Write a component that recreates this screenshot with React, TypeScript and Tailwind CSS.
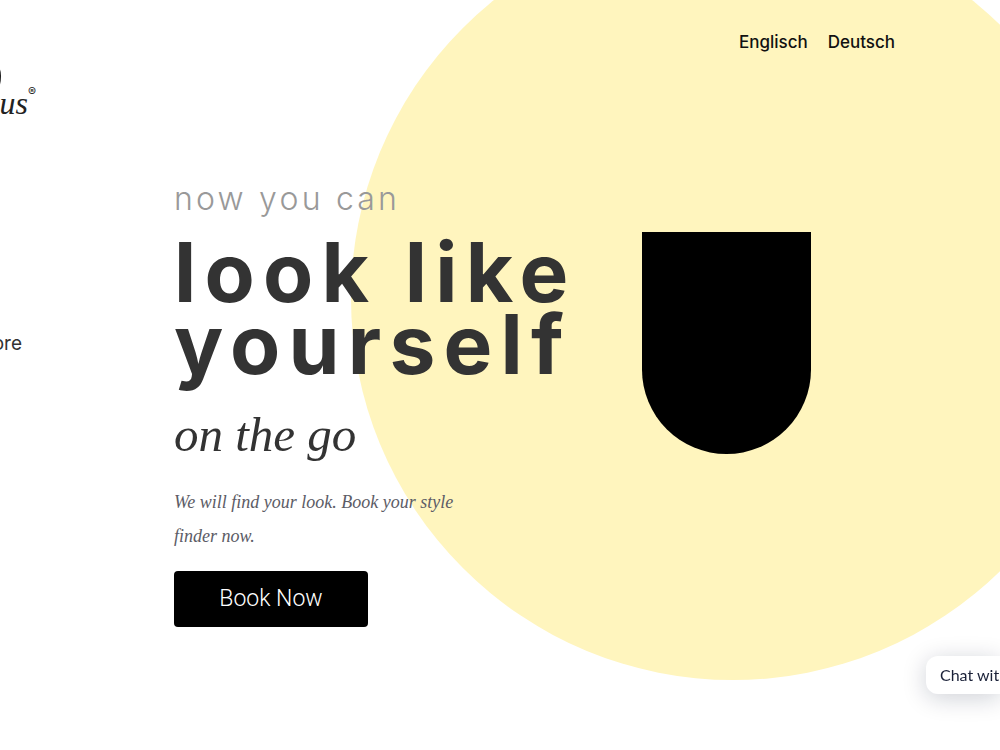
// ---------------------------------------------------------------------------
// Landing hero: cropped side rail, headline, shape, language links, chat
// ---------------------------------------------------------------------------

const LANGUAGES = [
  { code: "en", label: "Englisch" },
  { code: "de", label: "Deutsch" },
];

function SideRail() {
  return (
    <aside className="w-[174px] shrink-0 pt-[68px]">
      {/* Logo, runs off the left edge */}
      <a
        href="#home"
        className="relative flex h-[51px] w-9 items-end justify-end overflow-hidden whitespace-nowrap text-[#222]"
      >
        {/* Loop of the tall stroke */}
        <svg
          className="absolute top-0 left-0 h-6 w-2"
          viewBox="0 0 8 24"
          fill="none"
          stroke="currentColor"
          strokeWidth="1.2"
        >
          <path d="M-1 1C1 4 0.8 12 -1 18" />
        </svg>
        <span className="font-['Liberation_Serif',serif] text-[32px] leading-8 italic">
          us
        </span>
        <sup className="top-0 self-start pt-4 font-['Inter',sans-serif] text-[12px] leading-4">
          ®
        </sup>
      </a>
      <nav className="mt-[213px] flex w-[22px] justify-end overflow-hidden whitespace-nowrap">
        <a
          href="#store"
          className="font-['Inter',sans-serif] text-[19px] leading-6 text-[#333]"
        >
          Store
        </a>
      </nav>
    </aside>
  );
}

function Hero() {
  return (
    <section className="flex items-start pt-[127px]">
      <div className="w-[468px] shrink-0">
        <p className="font-['Inter',sans-serif] text-[32px] leading-10 font-light tracking-widest text-[#999]">
          now you can
        </p>
        <h1 className="mt-[18px] font-['Inter',sans-serif] text-[82px] leading-[72px] font-bold tracking-widest whitespace-nowrap text-[#333]">
          look like
          <br />
          yourself
        </h1>
        <p className="mt-[26px] font-['Liberation_Serif',serif] text-[49px] leading-[56px] text-[#333] italic">
          on the go
        </p>
        <p className="mt-[22px] w-[300px] font-['Liberation_Serif',serif] text-lg leading-[34px] text-[#5c5c66] italic">
          We will find your look. Book your style finder now.
        </p>
        <button
          type="button"
          className="mt-[18px] h-[56px] w-[194px] rounded bg-black font-['Roboto',sans-serif] text-[23px] font-light text-white"
        >
          Book Now
        </button>
      </div>
      <div className="mt-[53px] h-[222px] w-[169px] shrink-0 rounded-b-full bg-black" />
    </section>
  );
}

export default function App() {
  return (
    <div className="relative flex min-h-screen overflow-hidden bg-white">
      {/* Backdrop circle */}
      <div className="absolute -top-[84px] left-[351px] size-[764px] rounded-full bg-[#fff5be]" />

      <div className="relative flex min-w-0 flex-1">
        <SideRail />
        <main className="min-w-0 flex-1">
          <nav className="flex justify-end gap-5 pt-8 pr-[105px]">
            {LANGUAGES.map((lang) => (
              <a
                key={lang.code}
                href={`#${lang.code}`}
                className="font-['Inter',sans-serif] text-[17px] leading-5 font-medium text-[#111]"
              >
                {lang.label}
              </a>
            ))}
          </nav>
          <Hero />
        </main>
      </div>

      {/* Chat bubble */}
      <button
        type="button"
        className="fixed right-0 bottom-14 h-[38px] w-[74px] rounded-l-xl bg-white pl-3.5 text-left font-['Lato',sans-serif] text-base whitespace-nowrap text-[#1a2138] shadow-[0_4px_24px_rgba(10,20,50,0.2)]"
      >
        Chat with us
      </button>
    </div>
  );
}
